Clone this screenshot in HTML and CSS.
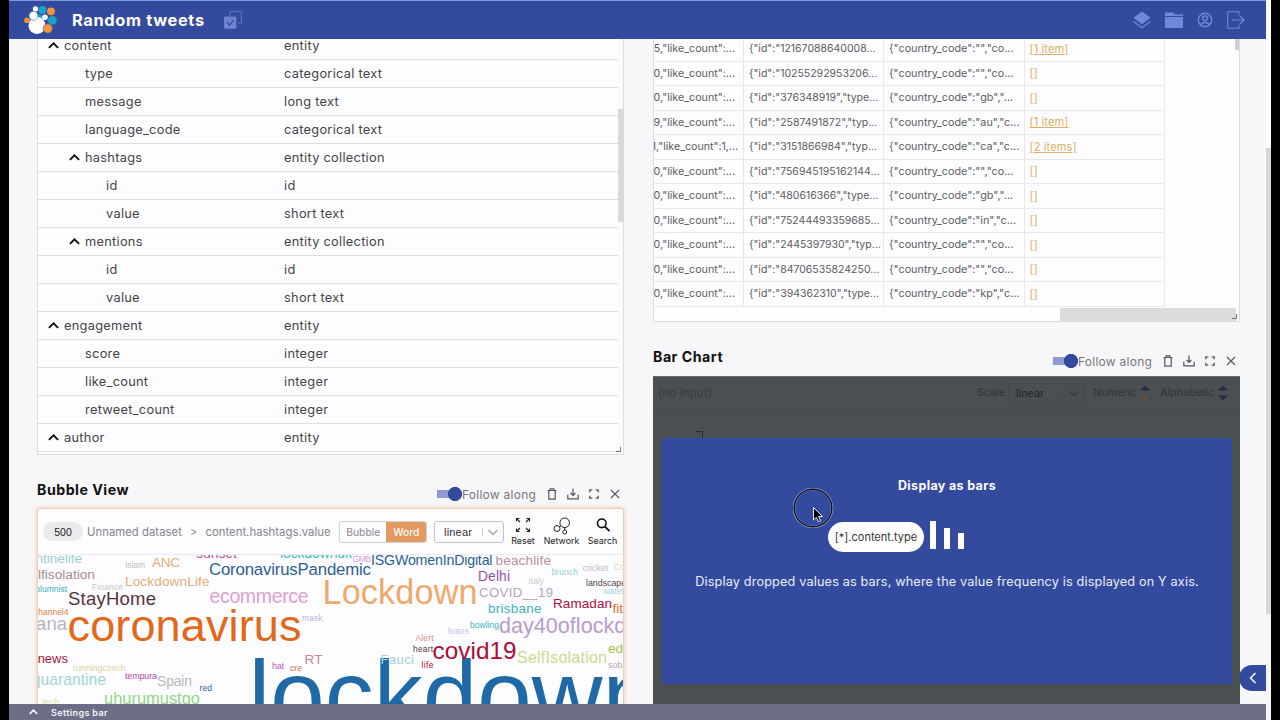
FILE: index.html
```html
<!DOCTYPE html>
<html lang="en">
<head>
<meta charset="utf-8">
<title>Random tweets</title>
<link rel="stylesheet" href="styles.css">
</head>
<body>
<svg class="defs" width="0" height="0">
  <symbol id="trash" viewBox="0 0 12 12"><path d="M1.500 2.500h9M4.200 2V.8h3.600V2M2.800 2.700v8.500h6.400V2.700" fill="none" stroke="currentColor" stroke-width="1.200"/></symbol>
  <symbol id="download" viewBox="0 0 12 12"><path d="M6 .500v6.800M3.600 5L6 7.400 8.400 5M.800 6.800v4h10.400v-4" fill="none" stroke="currentColor" stroke-width="1.200"/></symbol>
  <symbol id="expand" viewBox="0 0 12 12"><path d="M1.800 4.300V1.800h2.500M7.700 1.800h2.500v2.500M10.200 7.700v2.500H7.700M4.300 10.200H1.800V7.700" fill="none" stroke="currentColor" stroke-width="1.300"/></symbol>
  <symbol id="close" viewBox="0 0 12 12"><path d="M2 2l8 8M10 2l-8 8" fill="none" stroke="currentColor" stroke-width="1.100"/></symbol>
  <symbol id="chev" viewBox="0 0 10 6"><path d="M.8 5.200L5 1l4.200 4.200" fill="none" stroke="currentColor" stroke-width="1.700"/></symbol>
</svg>
<div class="app">
  <header class="topbar">
    <svg class="logo" viewBox="0 0 34 30" width="34" height="30">
      <circle cx="12.500" cy="4" r="2.700" fill="#fff"/><circle cx="19.500" cy="5" r="3.900" fill="#1ba3c6"/><circle cx="28" cy="6.300" r="3.900" fill="#f0953a"/>
      <circle cx="29.300" cy="15.300" r="4.400" fill="#1ba3c6"/><circle cx="4" cy="15.300" r="2.800" fill="#e8903c"/>
      <circle cx="16" cy="13.500" r="4" fill="#1ba3c6"/>
      <circle cx="14" cy="20.500" r="8.500" fill="#fff"/><circle cx="10.500" cy="10.800" r="4.500" fill="#fff" stroke="#344a9e" stroke-width=".5"/>
      <circle cx="22" cy="12.300" r="2.800" fill="#fff"/><circle cx="24.800" cy="23.500" r="4.700" fill="#f0953a" stroke="#344a9e" stroke-width=".5"/>
    </svg>
    <h1 class="title">Random tweets</h1>
    <svg class="stack" viewBox="0 0 18 18" width="18" height="18"><path d="M6 5V.7h11.300v11.300H14" fill="none" stroke="#5f76c8"/><rect x="0" y="5.500" width="12.300" height="12.300" rx="1" fill="#6e83cf"/><path d="M3 11.500l2.500 2.600 4.200-5" fill="none" stroke="#344a9e" stroke-width="1.200"/></svg>
    <nav class="nav">
      <svg viewBox="0 0 18 18" width="18" height="18"><path d="M9 .500L17.600 6.800 9 13.200.400 6.800z" fill="#6e88dc"/><path d="M.600 10.500L9 16.700l8.400-6.200" fill="none" stroke="#6e88dc" stroke-width="1.300"/></svg>
      <svg viewBox="0 0 18 18" width="18" height="18"><path d="M0 1.500h8l2 2h8V5H0zM0 6h18v11H0z" fill="#6e88dc"/></svg>
      <svg viewBox="0 0 16 16" width="16" height="16" fill="none" stroke="#6e88dc" stroke-width="1.400"><circle cx="8" cy="8" r="6.700"/><circle cx="8" cy="6.200" r="2.300"/><path d="M3.500 12.500c2.500-2.600 6.500-2.600 9 0"/></svg>
      <svg viewBox="0 0 18 18" width="18" height="18" fill="none" stroke="#6e88dc" stroke-width="1.100"><path d="M12 3.500V.700H.700v16.600H12v-3M5 9h12M12.500 4.500L17 9l-4.500 4.500"/></svg>
    </nav>
  </header>

  <main class="board">
    <section class="column">
      <div class="panel schema">
        <div class="schema-rows">
          <div class="field"><span class="name"><svg class="chev"><use href="#chev"/></svg>content</span><span>entity</span></div>
          <div class="field"><span class="name d1">type</span><span>categorical text</span></div>
          <div class="field"><span class="name d1">message</span><span>long text</span></div>
          <div class="field"><span class="name d1">language_code</span><span>categorical text</span></div>
          <div class="field"><span class="name n1"><svg class="chev"><use href="#chev"/></svg>hashtags</span><span>entity collection</span></div>
          <div class="field"><span class="name d2">id</span><span>id</span></div>
          <div class="field"><span class="name d2">value</span><span>short text</span></div>
          <div class="field"><span class="name n1"><svg class="chev"><use href="#chev"/></svg>mentions</span><span>entity collection</span></div>
          <div class="field"><span class="name d2">id</span><span>id</span></div>
          <div class="field"><span class="name d2">value</span><span>short text</span></div>
          <div class="field"><span class="name"><svg class="chev"><use href="#chev"/></svg>engagement</span><span>entity</span></div>
          <div class="field"><span class="name d1">score</span><span>integer</span></div>
          <div class="field"><span class="name d1">like_count</span><span>integer</span></div>
          <div class="field"><span class="name d1">retweet_count</span><span>integer</span></div>
          <div class="field"><span class="name"><svg class="chev"><use href="#chev"/></svg>author</span><span>entity</span></div>
        </div>
        <div class="vscroll"><div class="vthumb"></div></div>
        <i class="grip"></i>
      </div>
      <div class="head head-bubble">
        <h2>Bubble View</h2>
        <div class="tools"><span class="toggle"></span><span class="follow">Follow along</span><svg><use href="#trash"/></svg><svg><use href="#download"/></svg><svg><use href="#expand"/></svg><svg><use href="#close"/></svg></div>
      </div>
      <div class="bubble">
        <div class="controls">
          <span class="count">500</span>
          <span class="crumb">Unnamed dataset<i>&gt;</i>content.hashtags.value</span>
          <span class="seg"><span>Bubble</span><span class="on">Word</span></span>
          <span class="select">linear<svg viewBox="0 0 18 12" width="18" height="12"><path d="M.5 2v7" stroke="#ccc"/><path d="M6.500 4l4.500 4.500L15.500 4" fill="none" stroke="#aaa" stroke-width="1.500"/></svg></span>
          <span class="act reset"><svg viewBox="0 0 16 16" width="16" height="16"><path d="M1.500 4.500v-3h3M1.500 1.500l3.500 3.500M11.500 1.500h3v3M14.500 1.500L11 5M1.500 11.500v3h3M1.500 14.500L5 11M14.500 11.500v3h-3M14.500 14.500L11 11" fill="none" stroke="#222" stroke-width="1.100"/></svg>Reset</span>
          <span class="act network"><svg viewBox="0 0 18 18" width="18" height="18" fill="none" stroke="#222"><circle cx="11.700" cy="5.800" r="4.800"/><circle cx="4" cy="11.500" r="3"/><circle cx="11.700" cy="15" r="2"/><path d="M6.500 9.700l1.500-1M11.700 10.600V13"/></svg>Network</span>
          <span class="act search"><svg viewBox="0 0 16 16" width="16" height="16" fill="none" stroke="#111"><circle cx="6.800" cy="6.300" r="4.300" stroke-width="1.600"/><path d="M10 9.600l4.500 4.500" stroke-width="2"/></svg>Search</span>
        </div>
        <svg class="cloud" viewBox="38 555 585 149" width="585" height="149">
          <text x="82" y="563" font-size="13.500" fill="#9bcfcf" text-anchor="end">quarantinelife</text>
          <text x="196" y="558" font-size="14" fill="#bd52ab" textLength="41">sunset</text>
          <text x="280" y="558" font-size="14" fill="#38bcc0" textLength="72">lockdownuk</text>
          <text x="125" y="568" font-size="8.500" fill="#c0bfc4" textLength="20">Islam</text>
          <text x="152" y="567" font-size="13.500" fill="#e3ad76" textLength="28">ANC</text>
          <text x="95" y="579" font-size="13.700" fill="#a58d8d" text-anchor="end">selfisolation</text>
          <text x="209" y="575" font-size="16.800" fill="#2c5f95" textLength="162">CoronavirusPandemic</text>
          <text x="92" y="590" font-size="8.500" fill="#c8c4c8" textLength="31">Finance</text>
          <text x="125" y="586" font-size="13.500" fill="#e3ad76" textLength="84.500">LockdownLife</text>
          <text x="67" y="592" font-size="8.500" fill="#35b2ba" text-anchor="end">columnist</text>
          <text x="68" y="605" font-size="18.500" fill="#54343c" textLength="88">StayHome</text>
          <text x="209.500" y="603" font-size="19.500" fill="#dfa0cc" textLength="99">ecommerce</text>
          <text x="68.500" y="615" font-size="8.500" fill="#df8246" text-anchor="end">channel4</text>
          <text x="67" y="630" font-size="18.500" fill="#b8b4bc" text-anchor="end">ghana</text>
          <text x="67.500" y="641" font-size="45" fill="#e2691b" textLength="234">coronavirus</text>
          <text x="302" y="621" font-size="8.500" fill="#b8b8dc" textLength="20.500">mask</text>
          <text x="68" y="663" font-size="13" fill="#a01a3c" text-anchor="end">news</text>
          <text x="73" y="671" font-size="9" fill="#dcd6a0" textLength="52.500">runningczech</text>
          <text x="106" y="685" font-size="15.700" fill="#a2d5da" text-anchor="end">quarantine</text>
          <text x="125" y="679" font-size="9" fill="#b44cac" textLength="32">tempura</text>
          <text x="157" y="686" font-size="14" fill="#b8b8bc" textLength="35">Spain</text>
          <text x="199.500" y="691" font-size="8.500" fill="#2c5f95" textLength="12.500">red</text>
          <text x="42.500" y="705" font-size="8.500" fill="#d4dca0" textLength="16.500">tech</text>
          <text x="104" y="704" font-size="16.500" fill="#92d48a" textLength="96">uhurumustgo</text>
          <text x="304.500" y="663.500" font-size="13.500" fill="#d58096" textLength="18">RT</text>
          <text x="272" y="669" font-size="9" fill="#c062c0" textLength="12">hat</text>
          <text x="290" y="671" font-size="8.500" fill="#d27038" textLength="12">cre</text>
          <text x="248.400" y="729" font-size="98" fill="#1f6aa6">lockdown</text>
          <text x="352.500" y="561.500" font-size="8.500" fill="#d0a0d8" textLength="18.500">GMB</text>
          <text x="371" y="565" font-size="14.200" fill="#2c5f95" textLength="121.500">ISGWomenInDigital</text>
          <text x="495.500" y="565" font-size="13.500" fill="#b89494" textLength="55.500">beachlife</text>
          <text x="478" y="581" font-size="13.800" fill="#8c52aa" textLength="32">Delhi</text>
          <text x="551.500" y="575" font-size="8.500" fill="#92d2d2" textLength="26.500">brunch</text>
          <text x="582.500" y="571" font-size="9" fill="#c4c0c8" textLength="25.500">cricket</text>
          <text x="614" y="570" font-size="8.500" fill="#d4dab8">Covid</text>
          <text x="528.500" y="584" font-size="8.500" fill="#c8c8cc" textLength="15.500">italy</text>
          <text x="586" y="586" font-size="8.800" fill="#504848">landscape</text>
          <text x="603" y="594" font-size="8.800" fill="#a0d8e0">water</text>
          <text x="322.500" y="604" font-size="34.200" fill="#edaa6c" textLength="155">Lockdown</text>
          <text x="479" y="597" font-size="13.200" fill="#b8a4b8" textLength="74">COVID__19</text>
          <text x="488" y="613" font-size="13.500" fill="#3cb6b6" textLength="53.500">brisbane</text>
          <text x="553" y="608" font-size="13.500" fill="#aa0f3a" textLength="59">Ramadan</text>
          <text x="612.500" y="613" font-size="13.500" fill="#d87030">fitness</text>
          <text x="499" y="633" font-size="21.600" fill="#b79dcb">day40oflockdown</text>
          <text x="470" y="628" font-size="8.500" fill="#38b8b8" textLength="29">bowling</text>
          <text x="448" y="634" font-size="8.500" fill="#c0c0dc" textLength="21">loans</text>
          <text x="415.500" y="641" font-size="8.500" fill="#e08a8e" textLength="18">Alert</text>
          <text x="413" y="651.500" font-size="8.500" fill="#504048" textLength="20">heart</text>
          <text x="421.500" y="668" font-size="8.500" fill="#a01438" textLength="12">life</text>
          <text x="432.500" y="658.500" font-size="24.300" fill="#aa0f32" textLength="84">covid19</text>
          <text x="380.500" y="664" font-size="13.300" fill="#a0d4d8" textLength="33.500">Fauci</text>
          <text x="517" y="663" font-size="16" fill="#cbdb8e" textLength="90">SelfIsolation</text>
          <text x="608" y="653" font-size="13.500" fill="#a5c444">education</text>
          <text x="608" y="668" font-size="8.800" fill="#b8a8b8">sobar</text>
        </svg>
      </div>
    </section>

    <section class="column">
      <div class="panel data">
        <div class="grid">
          <span>5,"like_count":...</span><span>{"id":"12167088640008...</span><span>{"country_code":"","co...</span><span class="lk"><u>[1 item]</u></span>
          <span>0,"like_count":...</span><span>{"id":"10255292953206...</span><span>{"country_code":"","co...</span><span class="lk">[]</span>
          <span>0,"like_count":...</span><span>{"id":"376348919","type...</span><span>{"country_code":"gb","...</span><span class="lk">[]</span>
          <span>9,"like_count":...</span><span>{"id":"2587491872","typ...</span><span>{"country_code":"au","c...</span><span class="lk"><u>[1 item]</u></span>
          <span>1,"like_count":1,...</span><span>{"id":"3151866984","typ...</span><span>{"country_code":"ca","c...</span><span class="lk"><u>[2 items]</u></span>
          <span>0,"like_count":...</span><span>{"id":"756945195162144...</span><span>{"country_code":"","co...</span><span class="lk">[]</span>
          <span>0,"like_count":...</span><span>{"id":"480616366","type...</span><span>{"country_code":"gb","...</span><span class="lk">[]</span>
          <span>0,"like_count":...</span><span>{"id":"75244493359685...</span><span>{"country_code":"in","c...</span><span class="lk">[]</span>
          <span>0,"like_count":...</span><span>{"id":"2445397930","typ...</span><span>{"country_code":"","co...</span><span class="lk">[]</span>
          <span>0,"like_count":...</span><span>{"id":"84706535824250...</span><span>{"country_code":"","co...</span><span class="lk">[]</span>
          <span>0,"like_count":...</span><span>{"id":"394362310","type...</span><span>{"country_code":"kp","c...</span><span class="lk">[]</span>
        </div>
        <div class="hscroll"></div>
        <i class="grip"></i>
        <i class="vnub"></i>
      </div>
      <div class="head head-bar">
        <h2>Bar Chart</h2>
        <div class="tools"><span class="toggle"></span><span class="follow">Follow along</span><svg><use href="#trash"/></svg><svg><use href="#download"/></svg><svg><use href="#expand"/></svg><svg><use href="#close"/></svg></div>
      </div>
      <div class="chart">
        <div class="chart-top">
          <span class="noinput">(no input)</span>
          <span class="scale">Scale</span>
          <span class="select dim">linear<svg viewBox="0 0 18 12" width="18" height="12"><path d="M.5 2v7" stroke="#454a4c"/><path d="M6.500 4l4.500 4.500L15.500 4" fill="none" stroke="#383d40" stroke-width="1.300"/></svg></span>
          <span class="numeric">Numeric</span>
          <svg class="sort" viewBox="0 0 10 16"><path d="M0 5.500L5 .500l5 5z" fill="#242c44"/><path d="M0 10.500l5 5 5-5z" fill="#65503e"/></svg>
          <span class="alpha">Alphabetic</span>
          <svg class="sort" viewBox="0 0 10 16"><path d="M0 5.500L5 .500l5 5zM0 10.500l5 5 5-5z" fill="#242c44"/></svg>
        </div>
        <div class="plot"><i class="axis"></i></div>
        <div class="drop">
          <h3>Display as bars</h3>
          <div class="drop-mid"><span class="pill">[*].content.type</span><i class="bar b1"></i><i class="bar b2"></i><i class="bar b3"></i></div>
          <p>Display dropped values as bars, where the value frequency is displayed on Y axis.</p>
        </div>
      </div>
    </section>
  </main>
  <footer class="settings"><svg class="chev"><use href="#chev"/></svg>Settings bar</footer>
  <div class="drawer"><svg viewBox="0 0 8 12" width="8" height="12"><path d="M6.500 1L1.500 6l5 5" fill="none" stroke="#fff" stroke-width="1.500"/></svg></div>
  <svg class="cursor" viewBox="0 0 42 42" width="42" height="42"><circle cx="20" cy="20" r="19" fill="none" stroke="#8d99bd" stroke-width="2.600"/><circle cx="20" cy="20" r="18.800" fill="none" stroke="#101425" stroke-width="1.400"/><path d="M20.500 19.500v12.500l2.900-2.700 2 4.500 2.200-1-2-4.300h3.900z" fill="#000" stroke="#fff" stroke-width=".9"/></svg>
</div>
<aside class="pagescroll"></aside>
</body>
</html>
```
FILE: styles.css
```css
* { box-sizing: border-box; }
body { margin: 0; width: 1280px; height: 720px; overflow: hidden; background: #000; padding: 0 9px; display: flex; font-family: Inter, "Open Sans", sans-serif; color: #444448; }
i { font-style: normal; }
h1, h2, h3, p { margin: 0; }
.defs { position: absolute; }
.app { position: relative; width: 1257px; height: 720px; background: #f7f6f8; display: flex; flex-direction: column; }
.pagescroll { width: 5px; height: 720px; background: linear-gradient(#fcfbfd 0 148px, #d9d7db 148px 614px, #f6f4f7 614px); }

.topbar { position: relative; z-index: 2; flex: none; height: 39px; background: #344a9e; border-top: 1px solid #7f97dc; display: flex; align-items: center; padding-left: 14px; }
.logo { flex: none; }
.title { margin-left: 15px; width: 134px; color: #fff; font-size: 16.400px; font-weight: 700; letter-spacing: .65px; white-space: nowrap; }
.stack { margin-left: 18px; }
.nav { margin-left: auto; padding-right: 21px; display: flex; align-items: center; gap: 14px; }

.board { height: 665px; overflow: hidden; padding-left: 28px; display: flex; gap: 29px; }
.column { width: 587px; flex: none; display: flex; flex-direction: column; }
.panel { position: relative; background: #fdfcfe; border: 1px solid #dbdade; border-top: 0; overflow: hidden; flex: none; }
.schema { height: 416px; display: flex; }
.schema-rows { flex: 1; margin-top: -7px; }
.field { height: 28px; border-bottom: 1px solid #dfdde2; display: grid; grid-template-columns: 246px 1fr; align-items: center; font-size: 12.800px; letter-spacing: .28px; }
.name { display: flex; align-items: center; padding-left: 10px; }
.d1 { padding-left: 47px; }
.d2 { padding-left: 68px; }
.n1 { padding-left: 31px; }
.chev { width: 11px; height: 7px; margin-right: 5px; color: #111; }
.vscroll { width: 5px; background: #fafafb; padding-top: 70px; }
.vthumb { height: 113px; background: #d9d8db; }
.grip { position: absolute; right: 2px; bottom: 2px; width: 5px; height: 5px; border-right: 1.500px solid #77777b; border-bottom: 1.500px solid #77777b; }

.head { display: flex; justify-content: space-between; flex: none; }
.head-bubble { height: 53px; padding-top: 26px; }
.head-bar { height: 54px; padding-top: 26px; }
.head h2 { font-size: 14.200px; line-height: 18px; font-weight: 700; color: #111114; letter-spacing: .5px; }
.tools { display: flex; align-items: center; height: 26px; padding-right: 3px; color: #55555e; }
.tools svg { width: 12px; height: 12px; margin-left: 9px; }
.toggle { width: 26px; height: 14px; background: radial-gradient(circle at 19px 7px, #344a9e 6.800px, transparent 7.300px), linear-gradient(#8d9bd4, #8d9bd4) 1px 3px / 18px 8px no-repeat; }
.follow { width: 74px; font-size: 12px; letter-spacing: .25px; color: #77777f; white-space: nowrap; margin-right: 1px; }

.bubble { height: 200px; flex: none; background: #fdfcfe; border: 1px solid #f0cfb9; border-bottom: 0; border-radius: 3px 3px 0 0; box-shadow: 0 0 4px #efc3a6; }
.controls { height: 46px; border-bottom: 1px solid #ececee; padding-left: 5px; display: flex; align-items: center; white-space: nowrap; }
.count { width: 40px; height: 19px; border-radius: 9px; background: #ebeaec; font-family: "Liberation Sans", sans-serif; font-size: 10.500px; color: #222; display: flex; align-items: center; justify-content: center; flex: none; }
.crumb { width: 248px; margin-left: 4px; font-size: 11.300px; letter-spacing: .04px; color: #85858b; }
.crumb i { margin: 0 8px; }
.seg { width: 88px; height: 22px; flex: none; border: 1px solid #d2d1d4; border-radius: 3px; display: flex; overflow: hidden; margin-left: 4px; font-size: 10.300px; line-height: 20px; color: #8a8a8e; text-align: center; }
.seg span { width: 47px; }
.seg .on { width: 40px; background: #e09a62; color: #fff6ee; font-weight: 500; }
.select { width: 70px; height: 22px; flex: none; margin-left: 7px; padding: 0 3px 0 9px; border: 1px solid #c4c4c8; border-radius: 3px; font-family: "Liberation Sans", sans-serif; font-size: 11px; letter-spacing: .2px; color: #333; display: flex; align-items: center; justify-content: space-between; }
.act { display: flex; flex-direction: column; align-items: center; justify-content: space-between; height: 29px; font-size: 8.900px; line-height: 10px; color: #222; flex: none; }
.reset { width: 26px; margin-left: 6px; }
.network { width: 39px; margin-left: 6px; }
.search { width: 31px; margin-left: 6px; }
.cloud { display: block; font-family: "Liberation Sans", sans-serif; overflow: hidden; }

.data { height: 283px; }
.grid { display: grid; grid-template-columns: 90px 140px 140.500px 140px; grid-auto-rows: 24.530px; margin-top: -2px; font-size: 10.500px; white-space: nowrap; color: #5c5c60; }
.grid > span { border-right: 1px solid #e8e7ea; border-bottom: 1px solid #e8e7ea; padding-left: 5px; display: flex; align-items: center; overflow: hidden; }
.grid > span:nth-child(4n+1) { padding: 0 8px 0 0; justify-content: flex-end; font-size: 10.700px; }
.grid > span:nth-child(17) { padding-right: 5px; letter-spacing: -.03px; }
.grid > span:nth-child(4n+3) { font-size: 10.800px; }
.grid > .lk { color: #d9b264; font-size: 11.100px; letter-spacing: .1px; }
.hscroll { position: absolute; right: 3px; bottom: 0; width: 176px; height: 13px; background: #dcdbdd; }
.vnub { position: absolute; right: 0; top: 0; width: 4px; height: 11px; background: #cfced2; }

.chart { height: 329px; flex: none; background: #4a4f51; border-top: 1px solid #686c6e; color: #303437; }
.chart-top { height: 32px; display: flex; align-items: center; border-bottom: 1px solid #454a4c; padding: 0 12px 0 5px; font-size: 10.800px; white-space: nowrap; }
.noinput { margin-right: auto; font-size: 11.300px; letter-spacing: .25px; color: #363b3d; }
.scale { margin-right: 3px; width: 28px; }
.select.dim { width: 77px; height: 20px; margin-left: 0; padding-left: 7px; border-color: #454a4c; color: #1f2224; }
.numeric { margin-left: 8px; width: 41px; }
.sort { flex: none; width: 10px; height: 16px; }
.numeric + .sort { margin: 0 10px 0 6px; }
.alpha { width: 52px; margin-right: 6px; }
.plot { height: 29px; padding: 22px 0 0 43px; }
.axis { display: block; width: 7px; height: 7px; border: 1px solid #2a2e30; border-left: 0; border-bottom: 0; }
.drop { margin: 0 8px 0 9px; height: 246px; background: #344a9e; color: #e9edfb; text-align: center; padding-top: 39px; }
.drop h3 { font-size: 12.500px; line-height: 18px; font-weight: 700; color: #fff; letter-spacing: .35px; }
.drop-mid { display: flex; align-items: flex-end; height: 57px; padding-left: 166px; }
.pill { width: 96px; height: 30px; border-radius: 15px; background: #fff; color: #333; font-size: 11px; display: flex; align-items: center; justify-content: center; margin-right: 6px; }
.bar { width: 6px; background: #fff; margin: 0 8px 3px 0; }
.b1 { height: 28px; }
.b2 { height: 21px; }
.b3 { height: 16px; }
.drop p { margin-top: 21px; font-size: 12.700px; letter-spacing: .15px; line-height: 18px; white-space: nowrap; }

.settings { height: 16px; background: #6c6d86; color: #f5f5fa; font-size: 9px; font-weight: 600; letter-spacing: .38px; display: flex; align-items: center; padding-left: 20px; }
.settings .chev { width: 9px; height: 6px; color: #fff; margin-right: 13px; }
.drawer { position: absolute; right: 0; top: 665px; width: 27px; height: 26px; border-radius: 13px 0 0 13px; background: #344a9e; display: flex; align-items: center; justify-content: center; }
.cursor { position: absolute; left: 784px; top: 488px; }
```
